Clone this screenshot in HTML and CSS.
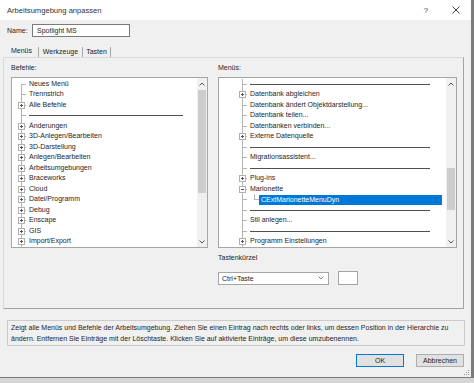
FILE: index.html
```html
<!DOCTYPE html>
<html lang="de">
  <head>
    <meta charset="UTF-8" />
    <title>Arbeitsumgebung anpassen</title>
    <link rel="stylesheet" href="styles.css">
  </head>
  <body>
    <div class="window">
      <div class="titlebar">
        <span class="title">Arbeitsumgebung anpassen</span>
        <span class="tb-btn">?</span>
        <span class="tb-btn">
          <svg width="8" height="8" viewBox="0 0 8 8"><path d="M0.5 0.5 L7.5 7.5 M7.5 0.5 L0.5 7.5" stroke="#333" stroke-width="0.9" fill="none"/></svg>
        </span>
      </div>

      <div class="name-row">
        <span class="name-label">Name:</span>
        <div class="textbox">Spotlight MS</div>
      </div>

      <div class="tabs">
        <span class="tab tab-menus active">Menüs</span>
        <span class="tab tab-tools">Werkzeuge</span>
        <span class="tab tab-keys">Tasten</span>
      </div>

      <div class="panel">
        <div class="col col-left">
          <div class="caption">Befehle:</div>
          <div class="listbox">
            <div class="tree tree-left">
              <div class="row"><span class="node first"></span><span class="label">Neues Menü</span></div>
              <div class="row"><span class="node"></span><span class="label">Trennstrich</span></div>
              <div class="row"><span class="node"><i class="box plus"></i></span><span class="label">Alle Befehle</span></div>
              <div class="row"><span class="node"></span><span class="sep sep-left"></span></div>
              <div class="row"><span class="node"><i class="box plus"></i></span><span class="label">Änderungen</span></div>
              <div class="row"><span class="node"><i class="box plus"></i></span><span class="label">3D-Anlegen/Bearbeiten</span></div>
              <div class="row"><span class="node"><i class="box plus"></i></span><span class="label">3D-Darstellung</span></div>
              <div class="row"><span class="node"><i class="box plus"></i></span><span class="label">Anlegen/Bearbeiten</span></div>
              <div class="row"><span class="node"><i class="box plus"></i></span><span class="label">Arbeitsumgebungen</span></div>
              <div class="row"><span class="node"><i class="box plus"></i></span><span class="label">Braceworks</span></div>
              <div class="row"><span class="node"><i class="box plus"></i></span><span class="label">Cloud</span></div>
              <div class="row"><span class="node"><i class="box plus"></i></span><span class="label">Datei/Programm</span></div>
              <div class="row"><span class="node"><i class="box plus"></i></span><span class="label">Debug</span></div>
              <div class="row"><span class="node"><i class="box plus"></i></span><span class="label">Enscape</span></div>
              <div class="row"><span class="node"><i class="box plus"></i></span><span class="label">GIS</span></div>
              <div class="row"><span class="node"><i class="box plus"></i></span><span class="label">Import/Export</span></div>
            </div>
            <div class="vscroll">
              <span class="arrow"><svg width="6" height="4" viewBox="0 0 6 4"><path d="M0.5 3.5 L3 1 L5.5 3.5" stroke="#555" stroke-width="1" fill="none"/></svg></span>
              <div class="track"><div class="thumb thumb-left"></div></div>
              <span class="arrow"><svg width="6" height="4" viewBox="0 0 6 4"><path d="M0.5 0.5 L3 3 L5.5 0.5" stroke="#555" stroke-width="1" fill="none"/></svg></span>
            </div>
          </div>
        </div>

        <div class="col col-right">
          <div class="caption">Menüs:</div>
          <div class="listbox">
            <div class="tree tree-right">
              <div class="row"><span class="node"></span><span class="sep sep-right"></span></div>
              <div class="row"><span class="node"><i class="box plus"></i></span><span class="label">Datenbank abgleichen</span></div>
              <div class="row"><span class="node"></span><span class="label">Datenbank ändert Objektdarstellung...</span></div>
              <div class="row"><span class="node"></span><span class="label">Datenbank teilen...</span></div>
              <div class="row"><span class="node"></span><span class="label">Datenbanken verbinden...</span></div>
              <div class="row"><span class="node"><i class="box plus"></i></span><span class="label">Externe Datenquelle</span></div>
              <div class="row"><span class="node"></span><span class="sep sep-right"></span></div>
              <div class="row"><span class="node"></span><span class="label">Migrationsassistent...</span></div>
              <div class="row"><span class="node"></span><span class="sep sep-right"></span></div>
              <div class="row"><span class="node"><i class="box plus"></i></span><span class="label">Plug-ins</span></div>
              <div class="row"><span class="node"><i class="box minus"></i></span><span class="label">Marionette</span></div>
              <div class="row"><span class="node"></span><span class="node child"></span><span class="selected">CExtMarionetteMenuDyn</span></div>
              <div class="row"><span class="node"></span><span class="sep sep-right"></span></div>
              <div class="row"><span class="node"></span><span class="label">Stil anlegen...</span></div>
              <div class="row"><span class="node"></span><span class="sep sep-right"></span></div>
              <div class="row"><span class="node"><i class="box plus"></i></span><span class="label">Programm Einstellungen</span></div>
            </div>
            <div class="vscroll">
              <span class="arrow"><svg width="6" height="4" viewBox="0 0 6 4"><path d="M0.5 3.5 L3 1 L5.5 3.5" stroke="#555" stroke-width="1" fill="none"/></svg></span>
              <div class="track"><div class="thumb thumb-right"></div></div>
              <span class="arrow"><svg width="6" height="4" viewBox="0 0 6 4"><path d="M0.5 0.5 L3 3 L5.5 0.5" stroke="#555" stroke-width="1" fill="none"/></svg></span>
            </div>
          </div>

          <div class="caption caption-keys">Tastenkürzel</div>
          <div class="shortcut-row">
            <div class="combo">
              <span>Ctrl+Taste</span>
              <svg width="6" height="4" viewBox="0 0 6 4"><path d="M0.5 0.5 L3 3 L5.5 0.5" stroke="#777" stroke-width="0.9" fill="none"/></svg>
            </div>
            <div class="keybox"></div>
          </div>
        </div>
      </div>

      <div class="hint">
        Zeigt alle Menüs und Befehle der Arbeitsumgebung. Ziehen Sie einen Eintrag nach rechts oder links, um dessen Position in der Hierarchie zu
        ändern. Entfernen Sie Einträge mit der Löschtaste. Klicken Sie auf aktivierte Einträge, um diese umzubenennen.
      </div>

      <div class="buttons">
        <button class="btn btn-default">OK</button>
        <button class="btn">Abbrechen</button>
      </div>

      <div class="footer">
        <svg class="grip" width="7" height="7" viewBox="0 0 7 7">
          <rect x="5" y="1" width="1" height="1" fill="#999"/>
          <rect x="3" y="3" width="1" height="1" fill="#999"/>
          <rect x="5" y="3" width="1" height="1" fill="#999"/>
          <rect x="1" y="5" width="1" height="1" fill="#999"/>
          <rect x="3" y="5" width="1" height="1" fill="#999"/>
          <rect x="5" y="5" width="1" height="1" fill="#999"/>
        </svg>
      </div>
    </div>
  </body>
</html>
```

FILE: styles.css
```css
html,
body {
  margin: 0;
  background: #d6d6d6;
  font-family: "Liberation Sans", Arial, sans-serif;
  font-size: 7px;
  color: #1e1e1e;
}

.window {
  width: 471px;
  height: 377px;
  border-right: 3px solid #7c7c7c;
  border-bottom: 1px solid #7c7c7c;
  background: #f0f0f0;
  display: flex;
  flex-direction: column;
}

/* title bar */
.titlebar {
  height: 20px;
  flex: none;
  background: #fff;
  display: flex;
  align-items: center;
  padding-left: 7px;
  font-size: 7.6px;
  color: #333;
}
.title {
  flex: 1;
}
.tb-btn {
  width: 30px;
  display: flex;
  justify-content: center;
  align-items: center;
  font-size: 8px;
  color: #444;
}

/* name */
.name-row {
  margin-top: 4px;
  height: 13px;
  flex: none;
  display: flex;
  align-items: center;
  padding-left: 7px;
}
.name-label {
  width: 25px;
}
.textbox {
  width: 92px;
  height: 11px;
  line-height: 11px;
  padding-left: 4px;
  border: 1px solid #7a7a7a;
  background: #fff;
}

/* tabs */
.tabs {
  margin: 8px 0 0 3px;
  height: 12px;
  flex: none;
  display: flex;
  align-items: flex-end;
}
.tab {
  height: 10px;
  line-height: 10px;
  text-align: center;
  box-sizing: border-box;
}
.tab-menus {
  width: 35px;
  height: 12px;
  line-height: 12px;
  padding-left: 2px;
}
.tab-tools {
  width: 44px;
  border-left: 1px solid #a8a8a8;
}
.tab-keys {
  width: 29px;
  border-left: 1px solid #a8a8a8;
  border-right: 1px solid #a8a8a8;
}

/* tab page */
.panel {
  margin-left: 3px;
  width: 452px;
  height: 245px;
  flex: none;
  border: 1px solid;
  border-color: #dadada #a3a3a3 #a3a3a3 #dadada;
  display: flex;
  gap: 10px;
  padding: 5px 0 0 7px;
}
.col {
  display: flex;
  flex-direction: column;
}
.col-left {
  width: 197px;
}
.col-right {
  width: 239px;
}
.caption {
  height: 10px;
  line-height: 10px;
  margin-bottom: 4px;
}
.caption-keys {
  margin-top: 5px;
}

.listbox {
  height: 169px;
  border: 1px solid #a5a5a5;
  background: #fff;
  display: flex;
}

/* tree */
.tree {
  flex: 1;
  padding-top: 0.75px;
  overflow: hidden;
}
.tree-left {
  padding-left: 5px;
}
.tree-right {
  padding-left: 19px;
}
.row {
  height: 10.5px;
  display: flex;
  align-items: center;
  white-space: nowrap;
}
.node {
  width: 9px;
  height: 100%;
  flex: none;
  display: flex;
  align-items: center;
  justify-content: center;
  background:
    linear-gradient(#b4b4b4, #b4b4b4) 4px 0 / 1px 100% no-repeat,
    linear-gradient(#b4b4b4, #b4b4b4) 4px 50% / 5px 1px no-repeat;
}
.node.first {
  background:
    linear-gradient(#b4b4b4, #b4b4b4) 4px 100% / 1px 50% no-repeat,
    linear-gradient(#b4b4b4, #b4b4b4) 4px 50% / 5px 1px no-repeat;
}
.node.child {
  margin-left: 3px;
  background:
    linear-gradient(#b4b4b4, #b4b4b4) 4px 0 / 1px 50% no-repeat,
    linear-gradient(#b4b4b4, #b4b4b4) 4px 50% / 5px 1px no-repeat;
}
.box {
  width: 5px;
  height: 5px;
  border: 1px solid #b0b0b0;
  display: block;
}
.box.plus {
  background:
    linear-gradient(#555, #555) center / 3px 1px no-repeat,
    linear-gradient(#555, #555) center / 1px 3px no-repeat,
    #fff;
}
.box.minus {
  background:
    linear-gradient(#555, #555) center / 3px 1px no-repeat,
    #fff;
}
.label {
  margin-left: 3px;
  line-height: 10.5px;
}
.sep {
  margin-left: 3px;
  height: 1px;
  background: #505050;
}
.sep-left {
  width: 154px;
}
.sep-right {
  width: 180px;
}
.selected {
  width: 181px;
  height: 10px;
  line-height: 10px;
  padding-left: 2px;
  background: #0078d7;
  color: #fff;
}

/* scrollbar */
.vscroll {
  width: 10px;
  flex: none;
  display: flex;
  flex-direction: column;
  background: #f0f0f0;
}
.arrow {
  height: 11px;
  display: flex;
  align-items: center;
  justify-content: center;
}
.track {
  flex: 1;
}
.thumb {
  margin: 0 1px;
  background: #cdcdcd;
}
.thumb-left {
  margin-top: 1px;
  height: 103px;
}
.thumb-right {
  margin-top: 79px;
  height: 42px;
}

/* shortcut */
.shortcut-row {
  margin-top: 4px;
  display: flex;
  align-items: center;
}
.combo {
  width: 102px;
  height: 11px;
  padding: 0 4px 0 3px;
  border: 1px solid #a5a5a5;
  background: #fff;
  display: flex;
  align-items: center;
  justify-content: space-between;
}
.keybox {
  margin-left: 9px;
  width: 18px;
  height: 12px;
  border: 1px solid #a5a5a5;
  background: #fff;
}

/* description */
.hint {
  margin: 11px 0 0 7px;
  width: 451px;
  height: 20px;
  padding: 2px 2px 2px 3px;
  border: 1px solid #cbcbcb;
  line-height: 10.5px;
  flex: none;
}

/* buttons */
.buttons {
  margin: 8px 7px 0 0;
  height: 13px;
  flex: none;
  display: flex;
  justify-content: flex-end;
  gap: 12px;
}
.btn {
  width: 48px;
  height: 13px;
  padding: 0;
  font-family: inherit;
  font-size: 7px;
  color: #1e1e1e;
  background: #e1e1e1;
  border: 1px solid #adadad;
}
.btn-default {
  border-color: #0078d7;
}

.footer {
  flex: 1;
  display: flex;
  justify-content: flex-end;
  align-items: flex-end;
  padding: 0 1px 1px 0;
}
```
